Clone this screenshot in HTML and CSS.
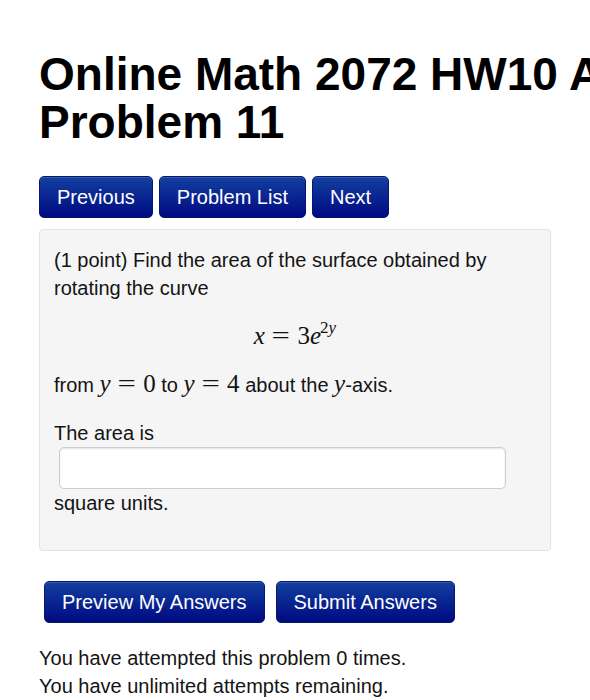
FILE: index.html
```html
<!DOCTYPE html>
<html lang="en">
<head>
<meta charset="utf-8">
<title>Online Math 2072 HW10 Problem 11</title>
<link rel="stylesheet" href="styles.css">
</head>
<body>
<div class="page">
  <h1 class="title"><span class="title-line">Online Math 2072 HW10 A</span><span class="title-line">Problem 11</span></h1>
  <nav class="nav">
    <a class="btn" href="#">Previous</a>
    <a class="btn" href="#">Problem List</a>
    <a class="btn" href="#">Next</a>
  </nav>
  <div class="card">
    <p class="q">(1 point) Find the area of the surface obtained by rotating the curve</p>
    <div class="eq"><span class="mi">x</span><span class="mo">=</span><span class="mn">3</span><span class="mi">e</span><sup class="sup"><span class="mn">2</span><span class="mi">y</span></sup></div>
    <p class="q">from <span class="m"><span class="mi">y</span><span class="mo">=</span><span class="mn">0</span></span> to <span class="m"><span class="mi">y</span><span class="mo">=</span><span class="mn">4</span></span> about the <span class="m"><span class="mi">y</span></span>-axis.</p>
    <p class="q area">The area is</p>
    <div class="answer-row"><input class="answer" type="text" aria-label="answer"></div>
    <p class="q">square units.</p>
  </div>
  <div class="actions">
    <button class="btn" type="button">Preview My Answers</button>
    <button class="btn" type="button">Submit Answers</button>
  </div>
  <p class="info">You have attempted this problem 0 times.<br>You have unlimited attempts remaining.</p>
</div>
</body>
</html>
```
FILE: styles.css
```css
html, body {
  margin: 0;
  padding: 0;
  background: #fff;
  overflow: hidden;
}
body {
  font-family: "Liberation Sans", Arial, sans-serif;
  font-size: 20px;
  line-height: 28px;
  color: #141414;
}
.page {
  width: 512px;
  padding: 50px 39px 0;
}
.title {
  margin: 0;
  font-size: 46px;
  line-height: 48px;
  font-weight: bold;
  color: #000;
}
.title-line {
  display: block;
  white-space: nowrap;
}
.nav {
  display: flex;
  gap: 6px;
  margin-top: 30px;
}
.btn {
  display: inline-block;
  box-sizing: border-box;
  height: 42px;
  padding: 6px 17px;
  font-family: "Liberation Sans", Arial, sans-serif;
  font-size: 20px;
  line-height: 28px;
  color: #fff;
  text-decoration: none;
  background: linear-gradient(to bottom, #123f9f 0%, #000a82 100%);
  border: 1px solid #06176a;
  border-radius: 5px;
  box-shadow: inset 0 1px 0 rgba(255,255,255,0.15);
  cursor: pointer;
}
.card {
  margin-top: 11px;
  box-sizing: border-box;
  height: 322px;
  padding: 16px 14px;
  background: #f5f5f5;
  border: 1px solid #e3e3e3;
  border-radius: 4px;
}
.q {
  margin: 0;
}
.eq {
  margin: 20px 0 21px;
  text-align: center;
  font-family: "Liberation Serif", "Times New Roman", serif;
  font-size: 25px;
  line-height: 28px;
  color: #111;
}
.mi {
  font-style: italic;
}
.mo {
  display: inline-block;
  width: 0.78em;
  margin: 0 0.26em;
  text-align: center;
  transform: scaleX(1.3);
}
.sup {
  font-size: 17px;
  line-height: 0;
  vertical-align: 11px;
  margin-left: -1px;
}
.m {
  font-family: "Liberation Serif", "Times New Roman", serif;
  font-size: 25px;
  line-height: 20px;
}
.area {
  margin-top: 20px;
}
.answer-row {
  height: 42px;
  padding-left: 5px;
}
.answer {
  box-sizing: border-box;
  width: 447px;
  height: 42px;
  margin: 0;
  padding: 4px 8px;
  font-size: 20px;
  background: #fff;
  border: 1px solid #cccccc;
  border-radius: 5px;
  box-shadow: inset 0 1px 2px rgba(0,0,0,0.1);
}
.actions {
  display: flex;
  gap: 11px;
  margin-top: 30px;
  padding-left: 5px;
}
.actions .btn {
  height: 42px;
}
.info {
  margin: 21px 0 0;
}
```
